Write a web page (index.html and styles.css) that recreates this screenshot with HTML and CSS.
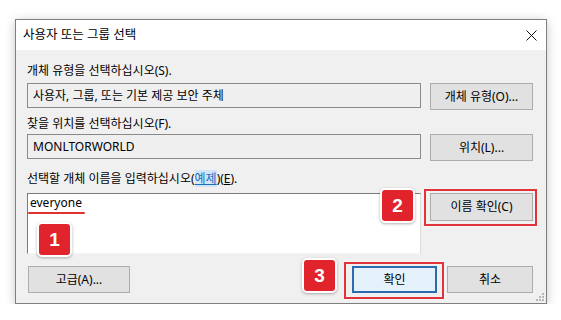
FILE: index.html
```html
<!DOCTYPE html>
<html lang="ko">
<head>
<meta charset="utf-8">
<title>사용자 또는 그룹 선택</title>
<link rel="stylesheet" href="styles.css">
</head>
<body>
<div class="window">
  <div class="titlebar">
    <span class="title">사용자 또는 그룹 선택</span>
    <svg class="close" width="11" height="11" viewBox="0 0 11 11"><path d="M0.5 0.5 L10.5 10.5 M10.5 0.5 L0.5 10.5" stroke="#111" stroke-width="1" fill="none"/></svg>
  </div>
  <div class="content">
    <div class="label l1">개체 유형을 선택하십시오(S).</div>
    <div class="row">
      <div class="field">사용자, 그룹, 또는 기본 제공 보안 주체</div>
      <div class="btn">개체 유형(O)...</div>
    </div>
    <div class="label l2">찾을 위치를 선택하십시오(F).</div>
    <div class="row">
      <div class="field">MONLTORWORLD</div>
      <div class="btn">위치(L)...</div>
    </div>
    <div class="label l3">선택할 개체 이름을 입력하십시오(<span class="link">예제</span>)(<span class="acc">E</span>).</div>
    <div class="row">
      <div class="textarea"><span class="typed">everyone</span><span class="underline"></span></div>
      <div class="btn mark2">이름 확인(C)</div>
    </div>
    <div class="bottom">
      <div class="btn adv">고급(A)...</div>
      <div class="actions">
        <div class="btn ok">확인</div>
        <div class="btn cancel">취소</div>
      </div>
    </div>
  </div>
  <svg class="grip" width="8" height="8" viewBox="0 0 8 8" fill="#b5b5b5"><rect x="6" y="0" width="2" height="2"/><rect x="3" y="3" width="2" height="2"/><rect x="6" y="3" width="2" height="2"/><rect x="0" y="6" width="2" height="2"/><rect x="3" y="6" width="2" height="2"/><rect x="6" y="6" width="2" height="2"/></svg>
  <div class="badge b1">1</div>
  <div class="badge b2">2</div>
  <div class="badge b3">3</div>
</div>
</body>
</html>
```
FILE: styles.css
```css
html, body {
  margin: 0;
  padding: 0;
  background: #ffffff;
}
body {
  font-family: "Noto Sans", "Noto Sans CJK KR", sans-serif;
  font-size: 12px;
  color: #000;
}
.window {
  position: relative;
  margin: 19px 0 0 15px;
  width: 530px;
  border: 1px solid #7f7f7f;
  background: #f0f0f0;
  box-shadow: 0 2px 10px rgba(0, 0, 0, 0.22);
}
.titlebar {
  height: 30px;
  background: #ffffff;
  display: flex;
  align-items: center;
  justify-content: space-between;
  padding: 0 9px 0 7px;
}
.title {
  font-size: 12.5px;
  line-height: 16px;
  color: #000;
}
.close {
  display: block;
}
.content {
  padding: 12px 13px 10px 11px;
  display: flex;
  flex-direction: column;
}
.label {
  line-height: 18px;
  height: 18px;
  white-space: nowrap;
}
.l1 { margin-bottom: 3px; }
.l2 { margin-top: 5px; margin-bottom: 1px; }
.l3 { margin-top: 9px; margin-bottom: 5px; }
.link {
  color: #1a6fc4;
  background: #d3e6f7;
  text-decoration: underline;
}
.acc { text-decoration: underline; }
.row {
  display: grid;
  grid-template-columns: 394px 103px;
  column-gap: 9px;
  align-items: start;
}
.field {
  box-sizing: border-box;
  height: 25px;
  border: 1px solid #8a8a8a;
  background: #efefef;
  padding: 0 5px;
  line-height: 23px;
  white-space: nowrap;
}
.btn {
  box-sizing: border-box;
  height: 27px;
  border: 1px solid #adadad;
  background: #e1e1e1;
  text-align: center;
  line-height: 25px;
  white-space: nowrap;
  position: relative;
}
.textarea {
  position: relative;
  box-sizing: border-box;
  height: 61px;
  background: #ffffff;
  border-top: 1px solid #7a7a7a;
  border-left: 1px solid #7a7a7a;
  border-right: 1px solid #dcdcdc;
  border-bottom: 1px solid #f5f5f5;
  padding: 1px 2px;
  line-height: 16px;
}
.underline {
  position: absolute;
  left: 0;
  top: 18px;
  width: 57px;
  height: 2px;
  background: #e0312f;
  border-radius: 1px;
}
.mark2 {
  height: 28px;
  line-height: 26px;
}
.mark2::after {
  content: "";
  position: absolute;
  left: -7px;
  right: -5px;
  top: -5px;
  bottom: -6px;
  border: 2px solid #e3333a;
  box-shadow: 0 0 2px rgba(255,255,255,0.9), inset 0 0 1px rgba(255,255,255,0.9);
}
.bottom {
  margin-top: 12px;
  display: flex;
  justify-content: space-between;
  align-items: start;
}
.adv {
  width: 102px;
  margin-left: 1px;
}
.actions {
  display: flex;
  gap: 10px;
}
.ok {
  width: 85px;
  border: 2px solid #2b6bb0;
  background: #e5f1fb;
  line-height: 23px;
}
.ok::after {
  content: "";
  position: absolute;
  left: -10px;
  right: -9px;
  top: -6px;
  bottom: -8px;
  border: 2px solid #e3333a;
  box-shadow: 0 0 2px rgba(255,255,255,0.9), inset 0 0 1px rgba(255,255,255,0.9);
}
.cancel {
  width: 86px;
}
.grip {
  position: absolute;
  right: 2px;
  bottom: 2px;
}
.badge {
  position: absolute;
  box-sizing: border-box;
  width: 35px;
  height: 35px;
  border: 2px solid #ffffff;
  border-radius: 5px;
  background: #e1242c;
  box-shadow: 0 1px 3px rgba(0, 0, 0, 0.3);
  color: #ffffff;
  font-family: "Liberation Sans", Arial, sans-serif;
  font-weight: bold;
  font-size: 19px;
  line-height: 31px;
  text-align: center;
}
.b1 { left: 21px; top: 202px; }
.b2 { left: 364px; top: 168px; }
.b3 { left: 286px; top: 238px; }
```
